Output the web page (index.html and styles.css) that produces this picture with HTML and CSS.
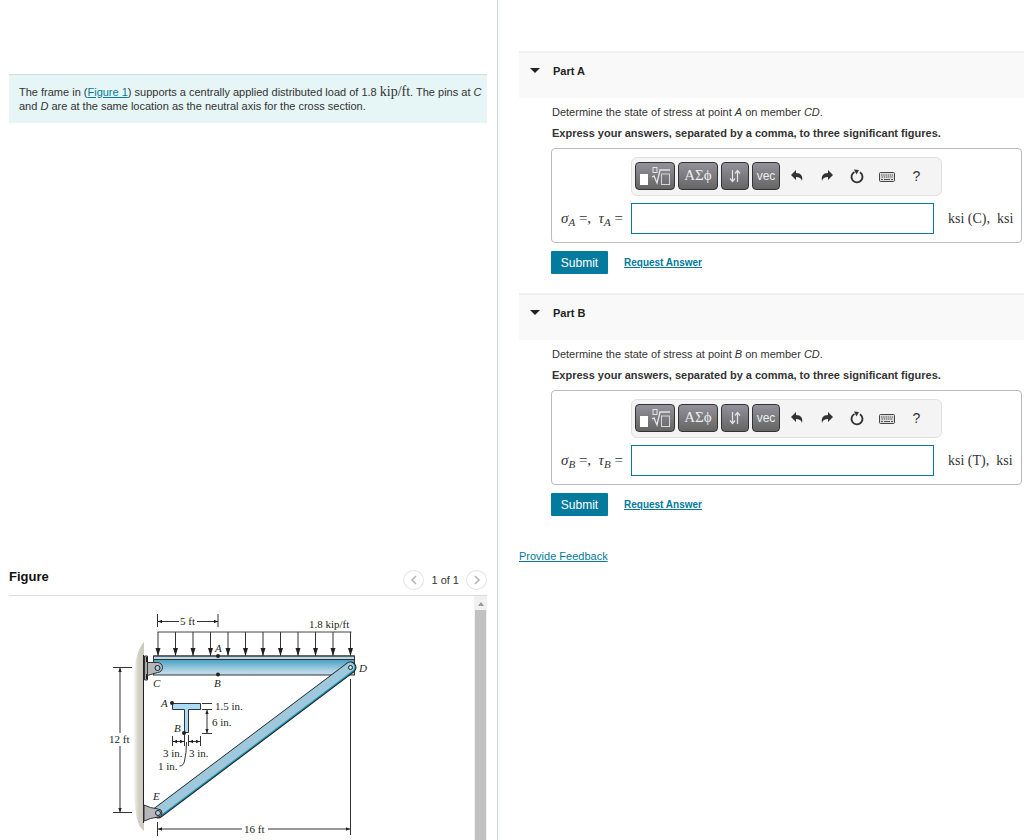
FILE: index.html
```html
<!DOCTYPE html>
<html lang="en">
<head>
    <meta charset="UTF-8">
    <meta name="viewport" content="width=device-width, initial-scale=1.0">
    <title>Frame Stress Problem</title>
    <link rel="stylesheet" href="styles.css">
</head>
<body>
    <!-- shared icons -->
    <svg class="icon-defs" width="0" height="0" aria-hidden="true">
        <symbol id="icon-template" viewBox="0 0 32 20">
            <rect x="1" y="8" width="8" height="11" fill="#fff"/>
            <rect x="14" y="1.500" width="4" height="5" fill="none" stroke="#e4e4e4"/>
            <path d="M13 11l2-1 3 7 3-13h10" fill="none" stroke="#e4e4e4" stroke-width="1.300"/>
            <rect x="22.500" y="8" width="8" height="10.500" fill="none" stroke="#d6d6d6"/>
        </symbol>
        <symbol id="icon-arrows" viewBox="0 0 12 14">
            <path d="M3.500 1v11M1 9.500l2.500 3 2.500-3M8.500 13V2M6 4.500l2.500-3 2.500 3" fill="none" stroke="#e4e4e4" stroke-width="1.200"/>
        </symbol>
        <symbol id="icon-undo" viewBox="0 0 14 14">
            <path d="M1 6l5-5v3c5 0 7 3 6 8-1-3-2.500-4-6-4v3z" fill="#333"/>
        </symbol>
        <symbol id="icon-redo" viewBox="0 0 14 14">
            <path d="M13 6l-5-5v3c-5 0-7 3-6 8 1-3 2.500-4 6-4v3z" fill="#333"/>
        </symbol>
        <symbol id="icon-reset" viewBox="0 0 14 16">
            <path d="M10 4.300a5.500 5.500 0 1 1-5.500-.3" fill="none" stroke="#333" stroke-width="1.900"/>
            <path d="M4 1.500l5 .5-2.500 4.500z" fill="#333"/>
        </symbol>
        <symbol id="icon-keyboard" viewBox="0 0 16 10">
            <rect x=".5" y=".5" width="15" height="9" rx="1" fill="#ddd" stroke="#444"/>
            <path d="M2 3h12M2.500 5h11.500" stroke="#555" stroke-dasharray="1.500 .7"/>
            <path d="M2 7.500h2M5 7.500h6M12 7.500h2" stroke="#555"/>
        </symbol>
    </svg>

    <div class="page">
        <div class="left-panel">
            <div class="intro">
                The frame in (<a href="#figure">Figure 1</a>) supports a centrally applied distributed load of 1.8 <span class="math">kip/ft</span>. The pins at <i>C</i> and <i>D</i> are at the same location as the neutral axis for the cross section.
            </div>

            <div class="figure" id="figure">
                <div class="figure-header">
                    <h2>Figure</h2>
                    <div class="pager">
                        <button class="pager-btn" aria-label="Previous figure">
                            <svg width="8" height="10" viewBox="0 0 8 10"><path d="M6 1L2 5l4 4" fill="none" stroke="#b5b5b5" stroke-width="1.600"/></svg>
                        </button>
                        <span>1 of 1</span>
                        <button class="pager-btn" aria-label="Next figure">
                            <svg width="8" height="10" viewBox="0 0 8 10"><path d="M2 1l4 4-4 4" fill="none" stroke="#b5b5b5" stroke-width="1.600"/></svg>
                        </button>
                    </div>
                </div>
                <div class="figure-body">
                    <svg class="frame-drawing" width="464" height="244" viewBox="9 596 464 244" role="img" aria-label="Frame with beam CD and brace DE">
                        <defs>
                            <linearGradient id="beam" x1="0" y1="0" x2="0" y2="1">
                                <stop offset="0" stop-color="#2f93b6"/>
                                <stop offset=".3" stop-color="#5aa9c8"/>
                                <stop offset=".75" stop-color="#acd1e3"/>
                                <stop offset="1" stop-color="#c3deea"/>
                            </linearGradient>
                            <linearGradient id="wall" x1="0" y1="0" x2="1" y2="0">
                                <stop offset="0" stop-color="#fff"/>
                                <stop offset=".5" stop-color="#d2d1c5"/>
                                <stop offset="1" stop-color="#cac9bc"/>
                            </linearGradient>
                            <marker id="arrow" viewBox="0 0 8 6" refX="8" refY="3" markerWidth="8" markerHeight="6" markerUnits="userSpaceOnUse" orient="auto-start-reverse">
                                <path d="M0 .5L8 3 0 5.500z" fill="#231f20"/>
                            </marker>
                            <marker id="small" viewBox="0 0 4 4" refX="4" refY="2" markerWidth="4" markerHeight="4" markerUnits="userSpaceOnUse" orient="auto-start-reverse">
                                <path d="M0 .3L4 2 0 3.700z" fill="#231f20"/>
                            </marker>
                        </defs>

                        <!-- wall -->
                        <path d="M144 642v189q-6-4-8-17l-3-20v-115l3-20q3-12 8-17z" fill="url(#wall)"/>
                        <path d="M143.500 655v168" stroke="#231f20"/>

                        <!-- distributed load -->
                        <path d="M157.500 632h194" stroke="#444"/>
                        <g stroke="#333">
                            <path d="M158 632v24" marker-end="url(#arrow)"/>
                            <path d="M175.500 632v24" marker-end="url(#arrow)"/>
                            <path d="M193 632v24" marker-end="url(#arrow)"/>
                            <path d="M210.500 632v24" marker-end="url(#arrow)"/>
                            <path d="M228 632v24" marker-end="url(#arrow)"/>
                            <path d="M245.500 632v24" marker-end="url(#arrow)"/>
                            <path d="M263 632v24" marker-end="url(#arrow)"/>
                            <path d="M280.500 632v24" marker-end="url(#arrow)"/>
                            <path d="M298 632v24" marker-end="url(#arrow)"/>
                            <path d="M315.500 632v24" marker-end="url(#arrow)"/>
                            <path d="M333 632v24" marker-end="url(#arrow)"/>
                            <path d="M350.500 632v24" marker-end="url(#arrow)"/>
                        </g>

                        <!-- beam CD -->
                        <rect x="153.500" y="656" width="201" height="19" fill="url(#beam)" stroke="#333"/>
                        <rect x="154" y="656.500" width="200" height="3" fill="#bcd8e5"/>
                        <path d="M153.500 656h201M153.500 659.500h201" stroke="#333"/>

                        <!-- brace DE -->
                        <path d="M158 812.500L350.500 667.500" stroke="#231f20" stroke-width="12" stroke-linecap="round"/>
                        <path d="M158 812.500L350.500 667.500" stroke="#1995b3" stroke-width="10" stroke-linecap="round"/>
                        <path d="M157.500 812L350 667" stroke="#9fc8dd" stroke-width="9" stroke-linecap="round"/>
                        <circle cx="350.500" cy="667.500" r="2" fill="#cfe4ee" stroke="#231f20"/>

                        <!-- supports -->
                        <path d="M144.500 656h3v24h-3z" fill="#aaa" stroke="#333"/>
                        <path d="M147 657v5M147 674v5" stroke="#231f20" stroke-width="2"/>
                        <path d="M147.500 662.500l10 0a5 5 0 0 1 0 10l-10 3z" fill="#b5b6b9" stroke="#333"/>
                        <circle cx="157.500" cy="668" r="2.500" fill="#a9d2e6" stroke="#231f20"/>
                        <path d="M144 805q6 3 14 4a4 4 0 0 1 0 8q-8 1-14 4z" fill="#b5b6b9" stroke="#333"/>
                        <circle cx="158" cy="813" r="2.500" fill="#a9d2e6" stroke="#231f20"/>

                        <!-- points A and B -->
                        <circle cx="218" cy="656" r="2" fill="#231f20"/>
                        <circle cx="218" cy="674.500" r="2" fill="#231f20"/>

                        <!-- 5 ft dimension -->
                        <g stroke="#333" fill="none">
                            <path d="M157.500 614v13M218 614v13"/>
                            <path d="M179 621.500h-21" marker-end="url(#small)"/>
                            <path d="M197 621.500h21" marker-end="url(#small)"/>
                        </g>

                        <!-- 12 ft dimension -->
                        <g stroke="#333" fill="none">
                            <path d="M113 667.500h19M113 812.500h19"/>
                            <path d="M120 733v-65" marker-end="url(#small)"/>
                            <path d="M120 746v66" marker-end="url(#small)"/>
                        </g>

                        <!-- 16 ft dimension -->
                        <g stroke="#333" fill="none">
                            <path d="M157.500 822v14M350.500 679v156"/>
                            <path d="M242 829h-84" marker-end="url(#small)"/>
                            <path d="M268 829h82" marker-end="url(#small)"/>
                        </g>

                        <!-- T cross section -->
                        <path d="M172.500 703.500h28v6h-12v23h-4v-23h-12z" fill="#aadcf6" stroke="#333"/>
                        <circle cx="172" cy="703" r="2" fill="#231f20"/>
                        <circle cx="184" cy="733" r="2" fill="#231f20"/>
                        <g stroke="#333" fill="none">
                            <path d="M202 703.500h10M202 709.500h10M202 733.500h10"/>
                            <path d="M207 710v23" marker-start="url(#small)" marker-end="url(#small)"/>
                            <path d="M172.500 736v10M184.500 735v11M188.500 735v11M200.500 736v10"/>
                            <path d="M173 741.500h11" marker-start="url(#small)" marker-end="url(#small)"/>
                            <path d="M189 741.500h11" marker-start="url(#small)" marker-end="url(#small)"/>
                            <path d="M186.500 742q0 11-2 19-1 5-5 5"/>
                        </g>

                        <g class="drawing-text">
                            <text x="180" y="625">5 ft</text>
                            <text x="309" y="628">1.8 kip/ft</text>
                            <text x="109" y="743">12 ft</text>
                            <text x="244" y="833">16 ft</text>
                            <text x="215" y="710">1.5 in.</text>
                            <text x="212" y="726">6 in.</text>
                            <text x="163" y="757">3 in.</text>
                            <text x="189" y="757">3 in.</text>
                            <text x="158" y="770">1 in.</text>
                        </g>
                        <g class="drawing-text drawing-label">
                            <text x="215" y="652">A</text>
                            <text x="214" y="687">B</text>
                            <text x="153" y="687">C</text>
                            <text x="359" y="672">D</text>
                            <text x="153" y="800">E</text>
                            <text x="161" y="707">A</text>
                            <text x="174" y="732">B</text>
                        </g>
                    </svg>
                    <div class="scrollbar">
                        <div class="scroll-arrow"></div>
                        <div class="scroll-thumb"></div>
                    </div>
                </div>
            </div>
        </div>

        <div class="right-panel">
            <section class="part">
                <h2 class="part-header"><span class="caret"></span>Part A</h2>
                <div class="part-body">
                    <p>Determine the state of stress at point <i>A</i> on member <i>CD</i>.</p>
                    <p class="instructions">Express your answers, separated by a comma, to three significant figures.</p>
                    <div class="answer-box">
                        <div class="toolbar">
                            <button class="key key-wide" aria-label="Templates"><svg width="32" height="20"><use href="#icon-template"/></svg></button>
                            <button class="key key-wide key-greek">ΑΣϕ</button>
                            <button class="key" aria-label="Subscript and superscript"><svg width="12" height="14"><use href="#icon-arrows"/></svg></button>
                            <button class="key">vec</button>
                            <button class="tool" aria-label="Undo"><svg width="14" height="14"><use href="#icon-undo"/></svg></button>
                            <button class="tool" aria-label="Redo"><svg width="14" height="14"><use href="#icon-redo"/></svg></button>
                            <button class="tool" aria-label="Reset"><svg width="14" height="16"><use href="#icon-reset"/></svg></button>
                            <button class="tool" aria-label="Keyboard"><svg class="keyboard" width="16" height="10"><use href="#icon-keyboard"/></svg></button>
                            <button class="tool">?</button>
                        </div>
                        <label class="math" for="answer-a"><i>σ<sub>A</sub></i> =,&nbsp; <i>τ<sub>A</sub></i> =</label>
                        <input type="text" id="answer-a">
                        <span class="math units">ksi (C),&nbsp; ksi</span>
                    </div>
                    <div class="actions">
                        <button class="submit">Submit</button>
                        <a href="#">Request Answer</a>
                    </div>
                </div>
            </section>

            <section class="part">
                <h2 class="part-header"><span class="caret"></span>Part B</h2>
                <div class="part-body">
                    <p>Determine the state of stress at point <i>B</i> on member <i>CD</i>.</p>
                    <p class="instructions">Express your answers, separated by a comma, to three significant figures.</p>
                    <div class="answer-box">
                        <div class="toolbar">
                            <button class="key key-wide" aria-label="Templates"><svg width="32" height="20"><use href="#icon-template"/></svg></button>
                            <button class="key key-wide key-greek">ΑΣϕ</button>
                            <button class="key" aria-label="Subscript and superscript"><svg width="12" height="14"><use href="#icon-arrows"/></svg></button>
                            <button class="key">vec</button>
                            <button class="tool" aria-label="Undo"><svg width="14" height="14"><use href="#icon-undo"/></svg></button>
                            <button class="tool" aria-label="Redo"><svg width="14" height="14"><use href="#icon-redo"/></svg></button>
                            <button class="tool" aria-label="Reset"><svg width="14" height="16"><use href="#icon-reset"/></svg></button>
                            <button class="tool" aria-label="Keyboard"><svg class="keyboard" width="16" height="10"><use href="#icon-keyboard"/></svg></button>
                            <button class="tool">?</button>
                        </div>
                        <label class="math" for="answer-b"><i>σ<sub>B</sub></i> =,&nbsp; <i>τ<sub>B</sub></i> =</label>
                        <input type="text" id="answer-b">
                        <span class="math units">ksi (T),&nbsp; ksi</span>
                    </div>
                    <div class="actions">
                        <button class="submit">Submit</button>
                        <a href="#">Request Answer</a>
                    </div>
                </div>
            </section>

            <a class="feedback" href="#">Provide Feedback</a>
        </div>
    </div>
</body>
</html>
```
FILE: styles.css
```css
* {
    box-sizing: border-box;
}

body {
    margin: 0;
    font-family: "Liberation Sans", Arial, sans-serif;
    font-size: 11px;
    color: #333;
    background-color: #fff;
}

a {
    color: #047a9c;
}

button {
    font-family: inherit;
    padding: 0;
    cursor: pointer;
}

.icon-defs {
    display: block;
}

.math {
    font-family: "Liberation Serif", "Times New Roman", serif;
    font-size: 14px;
}

.page {
    display: flex;
    min-height: 100vh;
}

/* left side */
.left-panel {
    display: flex;
    flex-direction: column;
    justify-content: space-between;
    flex: 0 0 498px;
    padding: 74px 10px 0 9px;
    border-right: 1px solid #d0d7de;
}

.intro {
    padding: 10px 2px 10px 10px;
    border-top: 1px solid #d5dcdc;
    background-color: #e6f5f6;
    line-height: 14px;
}

.figure-header {
    display: flex;
    align-items: center;
    justify-content: space-between;
    height: 32px;
    border-bottom: 1px solid #ddd;
}

.figure-header h2 {
    margin: 0 0 6px;
    font-size: 13px;
    color: #111;
}

.pager {
    display: flex;
    align-items: center;
    gap: 7px;
}

.pager-btn {
    display: flex;
    align-items: center;
    justify-content: center;
    width: 21px;
    height: 20px;
    border: 1px solid #e4e4e4;
    border-radius: 50%;
    background-color: #fff;
}

.figure-body {
    display: flex;
    justify-content: space-between;
}

.frame-drawing {
    display: block;
}

.drawing-text {
    font-family: "Liberation Serif", "Times New Roman", serif;
    font-size: 11px;
    fill: #231f20;
}

.drawing-label {
    font-style: italic;
}

.scrollbar {
    display: flex;
    flex-direction: column;
    width: 13px;
    padding: 0 1px;
    background-color: #f1f1f1;
}

.scroll-arrow {
    height: 14px;
    padding: 6px 3px;
}

.scroll-arrow::before {
    content: "";
    display: block;
    border: 3px solid transparent;
    border-top: 0;
    border-bottom: 4px solid #999;
    width: 0;
}

.scroll-thumb {
    flex: 1;
    background-color: #c1c1c1;
}

/* right side */
.right-panel {
    flex: 1;
    min-width: 0;
    padding: 51px 0 0 21px;
}

.part {
    margin-bottom: 19px;
}

.part-header {
    display: flex;
    align-items: center;
    gap: 13px;
    height: 47px;
    margin: 0;
    padding: 0 11px 10px;
    border-top: 2px solid #f0f0f0;
    background-color: #f9f9f9;
    font-size: 11px;
    color: #222;
}

.caret {
    border: 5px solid transparent;
    border-top-color: #222;
    border-bottom: 0;
}

.part-body {
    padding: 6px 2px 0 32px;
}

.part-body p {
    margin: 0 0 5px;
    padding: 0 1px;
    line-height: 16px;
}

.part-body .instructions {
    margin-bottom: 7px;
    font-weight: bold;
}

.answer-box {
    display: grid;
    grid-template-columns: 63px 1fr 69px;
    align-items: center;
    gap: 7px;
    padding: 8px 11px 8px 9px;
    border: 1px solid #bbb;
    border-radius: 4px;
}

.answer-box label,
.units {
    white-space: nowrap;
}

.answer-box label {
    font-size: 15px;
}

.answer-box sub {
    font-size: 11px;
    line-height: 1;
    vertical-align: -3px;
}

.answer-box input {
    width: 100%;
    height: 31px;
    border: 1px solid #047a9c;
    background-color: #fff;
}

.units {
    padding-left: 7px;
}

.toolbar {
    display: flex;
    align-items: center;
    gap: 3px;
    grid-column: 2 / 4;
    justify-self: start;
    height: 39px;
    padding: 0 11px 2px 3px;
    border: 1px solid #e0e0e0;
    border-radius: 6px;
    background-color: #f4f4f4;
}

.key {
    display: flex;
    align-items: center;
    justify-content: center;
    width: 28px;
    height: 28px;
    border: 1px solid #333;
    border-radius: 4px;
    background-image: linear-gradient(#92919a, #656565);
    color: #eee;
    font-size: 12px;
}

.key-wide {
    width: 40px;
}

.key-greek {
    font-family: "Liberation Serif", "Times New Roman", serif;
    font-size: 15px;
}

.tool {
    display: flex;
    align-items: center;
    justify-content: center;
    width: 27px;
    height: 28px;
    border: 0;
    background: none;
    color: #333;
    font-size: 14px;
}

.keyboard {
    margin-top: 3px;
}

.actions {
    display: flex;
    align-items: center;
    gap: 16px;
    margin-top: 8px;
}

.actions a {
    font-size: 10px;
    font-weight: bold;
}

.submit {
    width: 57px;
    height: 23px;
    border: 0;
    border-radius: 1px;
    background-color: #047a9c;
    color: #fff;
    font-size: 12px;
}

.feedback {
    display: inline-block;
    margin-top: 15px;
    font-size: 11px;
}
```
